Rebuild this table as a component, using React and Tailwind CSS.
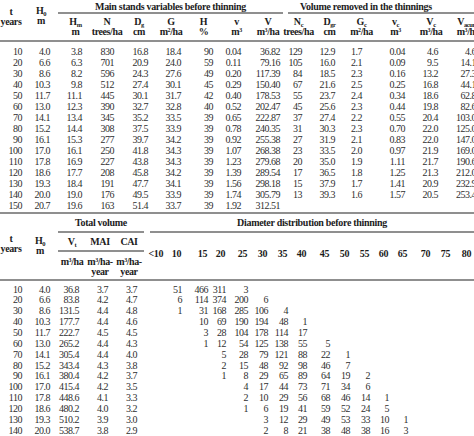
const TOP_COLS =
  'grid-cols-[22px_38px_31px_32px_32px_32px_33px_33px_30px_31px_31px_33px_35px_36px_38px]';
const BOT_COLS =
  'grid-cols-[22px_36px_28px_28px_30px_22px_18px_26px_18px_22px_20px_20px_19px_23px_20px_20px_19px_19px_23px_20px_21px]';

const TOP_PAD = [
  'pr-0', 'pr-[10px]', 'pr-[9px]', 'pr-[9px]', 'pr-[7px]', 'pr-[6px]', 'pr-[7px]', 'pr-[12px]',
  'pr-[3px]', 'pr-[12px]', 'pr-[10px]', 'pr-[16px]', 'pr-[8px]', 'pr-[11px]', 'pr-[11px]',
];
const BOT_PAD = ['pr-0', 'pr-[8px]', 'pr-[7px]', 'pr-[6px]', 'pr-[7px]'];

const TOP_ROWS = [
  ['10', '4.0', '3.8', '830', '16.8', '18.4', '90', '0.04', '36.82', '129', '12.9', '1.7', '0.04', '4.6', '4.6'],
  ['20', '6.6', '6.3', '701', '20.9', '24.0', '59', '0.11', '79.16', '105', '16.0', '2.1', '0.09', '9.5', '14.1'],
  ['30', '8.6', '8.2', '596', '24.3', '27.6', '49', '0.20', '117.39', '84', '18.5', '2.3', '0.16', '13.2', '27.3'],
  ['40', '10.3', '9.8', '512', '27.4', '30.1', '45', '0.29', '150.40', '67', '21.6', '2.5', '0.25', '16.8', '44.1'],
  ['50', '11.7', '11.1', '445', '30.1', '31.7', '42', '0.40', '178.53', '55', '23.7', '2.4', '0.34', '18.6', '62.8'],
  ['60', '13.0', '12.3', '390', '32.7', '32.8', '40', '0.52', '202.47', '45', '25.6', '2.3', '0.44', '19.8', '82.6'],
  ['70', '14.1', '13.4', '345', '35.2', '33.5', '39', '0.65', '222.87', '37', '27.4', '2.2', '0.55', '20.4', '103.0'],
  ['80', '15.2', '14.4', '308', '37.5', '33.9', '39', '0.78', '240.35', '31', '30.3', '2.3', '0.70', '22.0', '125.0'],
  ['90', '16.1', '15.3', '277', '39.7', '34.2', '39', '0.92', '255.38', '27', '31.9', '2.1', '0.83', '22.0', '147.0'],
  ['100', '17.0', '16.1', '250', '41.8', '34.3', '39', '1.07', '268.38', '23', '33.5', '2.0', '0.97', '21.9', '169.0'],
  ['110', '17.8', '16.9', '227', '43.8', '34.3', '39', '1.23', '279.68', '20', '35.0', '1.9', '1.11', '21.7', '190.6'],
  ['120', '18.6', '17.7', '208', '45.8', '34.2', '39', '1.39', '289.54', '17', '36.5', '1.8', '1.25', '21.3', '212.0'],
  ['130', '19.3', '18.4', '191', '47.7', '34.1', '39', '1.56', '298.18', '15', '37.9', '1.7', '1.41', '20.9', '232.9'],
  ['140', '20.0', '19.0', '176', '49.5', '33.9', '39', '1.74', '305.79', '13', '39.3', '1.6', '1.57', '20.5', '253.4'],
  ['150', '20.7', '19.6', '163', '51.4', '33.7', '39', '1.92', '312.51', '', '', '', '', '', ''],
];

const DIAM = ['<10', '10', '15', '20', '25', '30', '35', '40', '45', '50', '55', '60', '65', '70', '75', '80'];

const BOT_ROWS = [
  ['10', '4.0', '36.8', '3.7', '3.7', { 10: '51', 15: '466', 20: '311', 25: '3' }],
  ['20', '6.6', '83.8', '4.2', '4.7', { 10: '6', 15: '114', 20: '374', 25: '200', 30: '6' }],
  ['30', '8.6', '131.5', '4.4', '4.8', { 10: '1', 15: '31', 20: '168', 25: '285', 30: '106', 35: '4' }],
  ['40', '10.3', '177.7', '4.4', '4.6', { 15: '10', 20: '69', 25: '190', 30: '194', 35: '48', 40: '1' }],
  ['50', '11.7', '222.7', '4.5', '4.5', { 15: '3', 20: '28', 25: '104', 30: '178', 35: '114', 40: '17' }],
  ['60', '13.0', '265.2', '4.4', '4.3', { 15: '1', 20: '12', 25: '54', 30: '125', 35: '138', 40: '55', 45: '5' }],
  ['70', '14.1', '305.4', '4.4', '4.0', { 20: '5', 25: '28', 30: '79', 35: '121', 40: '88', 45: '22', 50: '1' }],
  ['80', '15.2', '343.4', '4.3', '3.8', { 20: '2', 25: '15', 30: '48', 35: '92', 40: '98', 45: '46', 50: '7' }],
  ['90', '16.1', '380.4', '4.2', '3.7', { 20: '1', 25: '8', 30: '29', 35: '65', 40: '89', 45: '64', 50: '19', 55: '2' }],
  ['100', '17.0', '415.4', '4.2', '3.5', { 25: '4', 30: '17', 35: '44', 40: '73', 45: '71', 50: '34', 55: '6' }],
  ['110', '17.8', '448.6', '4.1', '3.3', { 25: '2', 30: '10', 35: '29', 40: '56', 45: '68', 50: '46', 55: '14', 60: '1' }],
  ['120', '18.6', '480.2', '4.0', '3.2', { 25: '1', 30: '6', 35: '19', 40: '41', 45: '59', 50: '52', 55: '24', 60: '5' }],
  ['130', '19.3', '510.2', '3.9', '3.0', { 30: '3', 35: '12', 40: '29', 45: '49', 50: '53', 55: '33', 60: '10', 65: '1' }],
  ['140', '20.0', '538.7', '3.8', '2.9', { 30: '2', 35: '8', 40: '21', 45: '38', 50: '48', 55: '38', 60: '16', 65: '3' }],
];

const m3 = (
  <>
    m<sup className="text-[6px]">3</sup>
  </>
);
const m2 = (
  <>
    m<sup className="text-[6px]">2</sup>
  </>
);

function Sub({ base, sub }) {
  return (
    <>
      {base}
      <sub className="text-[6.5px]">{sub}</sub>
    </>
  );
}

const TOP_SUBHEADS = [
  [<Sub base="H" sub="m" />, 'm'],
  ['N', 'trees/ha'],
  [<Sub base="D" sub="g" />, 'cm'],
  ['G', <>{m2}/ha</>],
  ['H', '%'],
  ['v', m3],
  ['V', <>{m3}/ha</>],
  [<Sub base="N" sub="c" />, 'trees/ha'],
  [<Sub base="D" sub="gr" />, 'cm'],
  [<Sub base="G" sub="c" />, <>{m2}/ha</>],
  [<Sub base="v" sub="c" />, m3],
  [<Sub base="V" sub="c" />, <>{m3}/ha</>],
  [<Sub base="V" sub="acum." />, <>{m3}/ha</>],
];

function TopTable() {
  return (
    <div className="w-[487px]">
      <div
        className={`grid ${TOP_COLS} grid-rows-[14px_26px] border-b-2 border-[#8f8f8f] font-bold text-[10px] leading-[10px] tracking-[-0.4px] text-[#1c1c1c]`}
      >
        <div className="col-start-1 row-start-1 row-span-2 pt-[7px] text-center whitespace-nowrap">
          t<br />
          years
        </div>
        <div className="col-start-2 row-start-1 row-span-2 pt-[6px] text-center">
          <Sub base="H" sub="0" />
          <br />m
        </div>
        <div className="col-start-3 col-span-7 row-start-1 -ml-[2px] pt-[2px] border-b-2 border-[#8f8f8f] text-center whitespace-nowrap tracking-[-0.3px]">
          Main stands variables before thinning
        </div>
        <div className="col-start-10 col-span-6 row-start-1 ml-[5px] pl-[12px] pt-[2px] border-b-2 border-[#8f8f8f] text-left whitespace-nowrap tracking-[-0.3px]">
          Volume removed in the thinnings
        </div>
        {TOP_SUBHEADS.map(([a, b], i) => (
          <div key={i} className="row-start-2 pt-[3px] text-center whitespace-nowrap">
            {a}
            <br />
            {b}
          </div>
        ))}
      </div>
      <div className="pt-[3.5px] pb-[1.5px] border-b-2 border-[#8f8f8f]">
        {TOP_ROWS.map((row) => (
          <div
            key={row[0]}
            className={`grid ${TOP_COLS} h-[11px] items-center text-[10px] leading-[11px] tracking-[-0.5px] text-[#2e2e2e]`}
          >
            {row.map((v, i) => (
              <div key={i} className={`text-right whitespace-nowrap ${TOP_PAD[i]}`}>
                {v}
              </div>
            ))}
          </div>
        ))}
      </div>
    </div>
  );
}

function BottomTable() {
  return (
    <div className="w-[474px]">
      <div
        className={`grid ${BOT_COLS} grid-rows-[19px_19px_27px] border-b-2 border-[#8f8f8f] font-bold text-[10px] leading-[10px] tracking-[-0.4px] text-[#1c1c1c]`}
      >
        <div className="col-start-1 row-start-1 row-span-3 pt-[20px] text-center whitespace-nowrap">
          t<br />
          years
        </div>
        <div className="col-start-2 row-start-1 row-span-3 pt-[22px] text-center">
          <Sub base="H" sub="0" />
          <br />m
        </div>
        <div className="col-start-3 col-span-3 row-start-1 pt-[4px] border-b-2 border-[#8f8f8f] text-center whitespace-nowrap tracking-[-0.3px]">
          Total volume
        </div>
        <div className="col-start-6 col-span-16 row-start-1 ml-[6px] pt-[4px] border-b-2 border-[#8f8f8f] text-center whitespace-nowrap tracking-[-0.3px]">
          Diameter distribution before thinning
        </div>
        <div className="col-start-3 row-start-2 pt-[4px] border-b-2 border-[#8f8f8f] text-center">
          <Sub base="V" sub="t" />
        </div>
        <div className="col-start-4 row-start-2 pt-[4px] border-b-2 border-[#8f8f8f] text-center">MAI</div>
        <div className="col-start-5 row-start-2 pt-[4px] border-b-2 border-[#8f8f8f] text-center">CAI</div>
        {DIAM.map((d) => (
          <div key={d} className="row-start-2 row-span-2 pt-[16px] pr-[3px] text-right whitespace-nowrap">
            {d}
          </div>
        ))}
        <div className="col-start-3 row-start-3 pt-[5px] text-center whitespace-nowrap">{m3}/ha</div>
        <div className="col-start-4 row-start-3 pt-[5px] text-center whitespace-nowrap">
          {m3}/ha-
          <br />
          year
        </div>
        <div className="col-start-5 row-start-3 pt-[5px] text-center whitespace-nowrap">
          {m3}/ha-
          <br />
          year
        </div>
      </div>
      <div className="pt-[2.6px]">
        {BOT_ROWS.map((row) => (
          <div
            key={row[0]}
            className={`grid ${BOT_COLS} h-[10.85px] items-center text-[10px] leading-[11px] tracking-[-0.5px] text-[#2e2e2e]`}
          >
            {row.slice(0, 5).map((v, i) => (
              <div key={i} className={`text-right whitespace-nowrap ${BOT_PAD[i]}`}>
                {v}
              </div>
            ))}
            {DIAM.map((d) => (
              <div key={d} className="text-right whitespace-nowrap pr-[2px]">
                {row[5][d] || ''}
              </div>
            ))}
          </div>
        ))}
      </div>
    </div>
  );
}

export default function App() {
  return (
    <div className="w-[474px] h-[436px] overflow-hidden bg-white font-['Liberation_Serif','Times_New_Roman',serif]">
      <TopTable />
      <BottomTable />
    </div>
  );
}
